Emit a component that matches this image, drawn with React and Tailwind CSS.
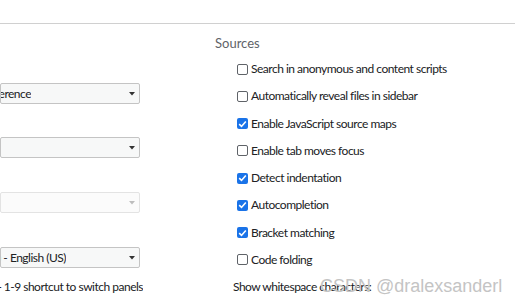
const SelectBox = ({ value, visible, disabled }) => (
  <div
    className={`flex h-[21px] w-[140px] items-center rounded-[2px] border pr-[4px] ${
      disabled ? 'border-[#e3e3e3] bg-[#fbfbfb]' : 'border-[#c4c4c4] bg-[#f7f8f8]'
    }`}
  >
    <div className="flex justify-end overflow-hidden whitespace-nowrap text-[#202124]" style={{ width: visible }}>
      {value}
    </div>
    <svg className="ml-auto" width="6" height="4" viewBox="0 0 6 4">
      <polygon points="0,0 6,0 3,3.5" fill={disabled ? '#bdbdbd' : '#333'} />
    </svg>
  </div>
);

const CheckRow = ({ label, checked }) => (
  <div className="flex h-[27.25px] items-center pl-[22px]">
    {checked ? (
      <span className="flex h-[11px] w-[11px] items-center justify-center rounded-[2px] bg-[#1a73e8]">
        <svg width="9" height="8" viewBox="0 0 9 8">
          <path d="M1.2 4.2 L3.5 6.4 L7.8 1.4" fill="none" stroke="white" strokeWidth="1.6" />
        </svg>
      </span>
    ) : (
      <span className="h-[11px] w-[11px] rounded-[2px] border border-[#5f6368] bg-white" />
    )}
    <span className="ml-[3px] whitespace-nowrap tracking-[-0.5px] text-[#202124]">{label}</span>
  </div>
);

const options = [
  ['Search in anonymous and content scripts', false],
  ['Automatically reveal files in sidebar', false],
  ['Enable JavaScript source maps', true],
  ['Enable tab moves focus', false],
  ['Detect indentation', true],
  ['Autocompletion', true],
  ['Bracket matching', true],
  ['Code folding', false],
];

export default function App() {
  return (
    <div
      className="relative h-[299px] w-[515px] overflow-hidden bg-white text-[12px] leading-[16px]"
      style={{ fontFamily: 'Lato, "Noto Sans", sans-serif' }}
    >
      <div className="h-[24px] border-b border-[#d0d0d0]" />
      <div className="flex">
        <div className="w-[215px] tracking-[-0.5px]">
          <div className="mt-[59px]">
            <SelectBox value="System preference" visible="30px" />
          </div>
          <div className="mt-[33px]">
            <SelectBox value="" visible="0px" />
          </div>
          <div className="mt-[34px]">
            <SelectBox value="" visible="0px" disabled />
          </div>
          <div className="mt-[34px]">
            <SelectBox value="English (US) - English (US)" visible="65px" />
          </div>
          <div className="mt-[11px] flex w-[143px] justify-end overflow-hidden whitespace-nowrap text-[#202124]">
            Enable Ctrl + 1-9 shortcut to switch panels
          </div>
        </div>
        <div className="flex-1">
          <div className="pt-[10px] text-[13px] leading-[18px] text-[#5f6368]">Sources</div>
          <div className="mt-[3.5px]">
            {options.map(([label, checked]) => (
              <CheckRow key={label} label={label} checked={checked} />
            ))}
            <div className="flex h-[27.25px] items-center pl-[18px] whitespace-nowrap tracking-[-0.5px] text-[#202124]">
              Show whitespace characters:
            </div>
          </div>
        </div>
      </div>
      <div
        className="absolute left-[320px] top-[275px] whitespace-nowrap text-[18px] leading-[22px] text-[#c4c4c4]"
        style={{ fontFamily: '"Liberation Sans", sans-serif' }}
      >
        CSDN @dralexsanderl
      </div>
    </div>
  );
}
